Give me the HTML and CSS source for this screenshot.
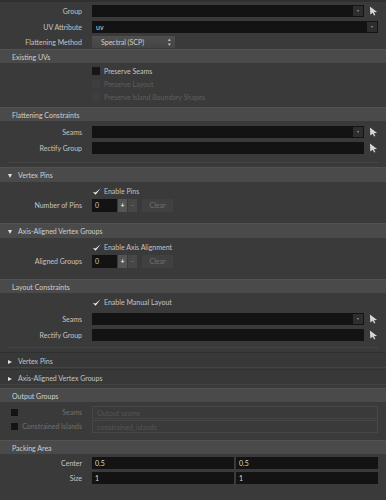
FILE: index.html
```html
<!DOCTYPE html>
<html lang="en">
    <head>
        <meta charset="UTF-8" />
        <title>UV Flatten</title>
        <link rel="stylesheet" href="styles.css">
    </head>
    <body>
        <div class="panel">
            <div class="top-rows">
                <div class="row">
                    <span class="label">Group</span>
                    <div class="field field-short"><span class="drop"></span></div>
                    <svg class="pick" viewBox="0 0 10 10"><path d="M1 0 L9 6 L5.5 6.3 L7 9.5 L5.6 10 L4.2 6.9 L1.5 9 Z" /></svg>
                </div>
                <div class="row">
                    <span class="label">UV Attribute</span>
                    <div class="field field-long">uv<span class="drop"></span></div>
                </div>
                <div class="row">
                    <span class="label">Flattening Method</span>
                    <div class="menu">Spectral (SCP)<span class="spin">&#x25B4;<br />&#x25BE;</span></div>
                </div>
            </div>

            <div class="band">Existing UVs</div>
            <div class="section checks">
                <div class="row check-row"><span class="box"></span><span>Preserve Seams</span></div>
                <div class="row check-row disabled"><span class="box"></span><span>Preserve Layout</span></div>
                <div class="row check-row disabled"><span class="box"></span><span>Preserve Island Boundary Shapes</span></div>
            </div>

            <div class="band">Flattening Constraints</div>
            <div class="section fields">
                <div class="row">
                    <span class="label">Seams</span>
                    <div class="field field-short"><span class="drop"></span></div>
                    <svg class="pick" viewBox="0 0 10 10"><path d="M1 0 L9 6 L5.5 6.3 L7 9.5 L5.6 10 L4.2 6.9 L1.5 9 Z" /></svg>
                </div>
                <div class="row">
                    <span class="label">Rectify Group</span>
                    <div class="field field-short"></div>
                    <svg class="pick" viewBox="0 0 10 10"><path d="M1 0 L9 6 L5.5 6.3 L7 9.5 L5.6 10 L4.2 6.9 L1.5 9 Z" /></svg>
                </div>
            </div>
            <div class="divider"></div>

            <div class="band folder"><span class="tri-down"></span>Vertex Pins</div>
            <div class="section pins">
                <div class="row check-row"><span class="box checked"><svg viewBox="0 0 10 10"><path d="M1 5.5 L4 8.5 L9.5 1.5 L4 6 Z" /></svg></span><span>Enable Pins</span></div>
                <div class="row">
                    <span class="label">Number of Pins</span>
                    <div class="num">0</div>
                    <span class="plus">+</span>
                    <span class="minus">&minus;</span>
                    <span class="clear">Clear</span>
                </div>
            </div>

            <div class="band folder"><span class="tri-down"></span>Axis-Aligned Vertex Groups</div>
            <div class="section pins">
                <div class="row check-row"><span class="box checked"><svg viewBox="0 0 10 10"><path d="M1 5.5 L4 8.5 L9.5 1.5 L4 6 Z" /></svg></span><span>Enable Axis Alignment</span></div>
                <div class="row">
                    <span class="label">Aligned Groups</span>
                    <div class="num">0</div>
                    <span class="plus">+</span>
                    <span class="minus">&minus;</span>
                    <span class="clear">Clear</span>
                </div>
            </div>

            <div class="band">Layout Constraints</div>
            <div class="section layout">
                <div class="row check-row"><span class="box checked"><svg viewBox="0 0 10 10"><path d="M1 5.5 L4 8.5 L9.5 1.5 L4 6 Z" /></svg></span><span>Enable Manual Layout</span></div>
                <div class="row">
                    <span class="label">Seams</span>
                    <div class="field field-short"><span class="drop"></span></div>
                    <svg class="pick" viewBox="0 0 10 10"><path d="M1 0 L9 6 L5.5 6.3 L7 9.5 L5.6 10 L4.2 6.9 L1.5 9 Z" /></svg>
                </div>
                <div class="row">
                    <span class="label">Rectify Group</span>
                    <div class="field field-short"></div>
                    <svg class="pick" viewBox="0 0 10 10"><path d="M1 0 L9 6 L5.5 6.3 L7 9.5 L5.6 10 L4.2 6.9 L1.5 9 Z" /></svg>
                </div>
            </div>
            <div class="divider"></div>

            <div class="closed"><span class="tri-right"></span>Vertex Pins</div>
            <div class="closed"><span class="tri-right"></span>Axis-Aligned Vertex Groups</div>

            <div class="band">Output Groups</div>
            <div class="section outputs">
                <div class="row">
                    <span class="toggle"></span>
                    <span class="label dim">Seams</span>
                    <div class="ghost">Output seams</div>
                </div>
                <div class="row">
                    <span class="toggle"></span>
                    <span class="label dim">Constrained Islands</span>
                    <div class="ghost">constrained_islands</div>
                </div>
            </div>

            <div class="band">Packing Area</div>
            <div class="section packing">
                <div class="row">
                    <span class="label">Center</span>
                    <div class="vec">0.5</div>
                    <div class="vec">0.5</div>
                </div>
                <div class="row">
                    <span class="label">Size</span>
                    <div class="vec">1</div>
                    <div class="vec">1</div>
                </div>
            </div>
        </div>
    </body>
</html>
```

FILE: styles.css
```css
body {
    margin: 0;
    background-color: #3a3a3a;
    font-family: 'Lato', 'Open Sans', sans-serif;
    font-size: 7px;
    color: #c4c4c4;
}
.panel {
    width: 386px;
    height: 500px;
    overflow: hidden;
    border-top: 2px solid #303030;
}
.top-rows {
    padding-top: 3px;
}
.top-rows .row {
    margin-bottom: 3.5px;
}
.top-rows .row:last-child {
    margin-bottom: 0.5px;
}
.row {
    display: flex;
    align-items: center;
    height: 12px;
}
.label {
    width: 82px;
    flex-shrink: 0;
    text-align: right;
    margin-right: 10px;
    white-space: nowrap;
}
.label.dim {
    color: #707070;
}
.field {
    position: relative;
    height: 12px;
    background-color: #131313;
    box-sizing: border-box;
    padding-left: 4px;
    line-height: 12px;
    color: #d8d8d8;
}
.field-short {
    width: 272px;
}
.field-long {
    width: 286px;
}
.drop {
    position: absolute;
    right: 1px;
    top: 1px;
    width: 10px;
    height: 10px;
    background-color: #2e2e2e;
}
.drop::after {
    content: '';
    position: absolute;
    left: 3.5px;
    top: 4px;
    border-left: 1.5px solid transparent;
    border-right: 1.5px solid transparent;
    border-top: 2px solid #9a9a9a;
}
.pick {
    width: 9px;
    height: 10px;
    margin-left: 5px;
    fill: #d6d6d6;
}
.menu {
    position: relative;
    width: 83px;
    height: 12px;
    line-height: 12px;
    box-sizing: border-box;
    padding-left: 9px;
    background: linear-gradient(#4e4e4e, #444444);
    border-radius: 1px;
    color: #d0d0d0;
}
.spin {
    position: absolute;
    right: 4px;
    top: 1px;
    font-size: 5px;
    line-height: 5px;
    color: #c8c8c8;
}
.band {
    height: 14px;
    line-height: 14px;
    background-color: #4a4a4a;
    border-top: 1px solid #525252;
    box-sizing: border-box;
    padding-left: 12px;
    color: #d0d0d0;
}
.band.folder {
    height: 15px;
    line-height: 15px;
    padding-left: 8px;
}
.tri-down {
    display: inline-block;
    vertical-align: middle;
    margin-right: 6px;
    border-left: 2.5px solid transparent;
    border-right: 2.5px solid transparent;
    border-top: 4px solid #e0e0e0;
}
.tri-right {
    display: inline-block;
    vertical-align: middle;
    margin-right: 6px;
    border-top: 2.5px solid transparent;
    border-bottom: 2.5px solid transparent;
    border-left: 4px solid #e0e0e0;
}
.section {
    box-sizing: border-box;
}
.check-row {
    height: 13px;
    padding-left: 92px;
}
.box {
    width: 8px;
    height: 8px;
    margin-right: 4px;
    background-color: #161616;
    position: relative;
}
.box.checked {
    background-color: transparent;
}
.box svg {
    width: 9px;
    height: 9px;
    fill: #f0f0f0;
}
.disabled {
    color: #5e5e5e;
}
.disabled .box {
    background-color: #3e3e3e;
}
.checks {
    padding-top: 2px;
    height: 44px;
}
.fields {
    padding-top: 5px;
    height: 41px;
}
.fields .row + .row,
.layout .row + .row {
    margin-top: 4px;
}
.divider {
    height: 1px;
    background-color: #454545;
    margin: 0 8px 4px;
}
.pins {
    padding-top: 3px;
    height: 41px;
}
.pins .row:last-child {
    height: 13px;
    margin-top: 1px;
}
.num {
    width: 25px;
    height: 13px;
    line-height: 13px;
    box-sizing: border-box;
    padding-left: 3px;
    background-color: #131313;
}
.plus,
.minus {
    width: 9px;
    height: 13px;
    line-height: 13px;
    text-align: center;
    margin-left: 1px;
    background-color: #555555;
    color: #f0f0f0;
    font-weight: bold;
}
.minus {
    background-color: #474747;
    color: #6a6a6a;
}
.clear {
    width: 31px;
    height: 13px;
    line-height: 13px;
    margin-left: 5px;
    text-align: center;
    background-color: #404040;
    color: #707070;
}
.layout {
    padding-top: 3px;
    height: 54px;
}
.layout .check-row {
    margin-bottom: 1px;
}
.closed {
    height: 16px;
    line-height: 16px;
    padding-left: 8px;
    border-top: 1px solid #303030;
    border-bottom: 1px solid #444444;
    background-color: #383838;
    box-sizing: border-box;
    margin-bottom: 1px;
}
.closed + .closed {
    margin-bottom: 3px;
}
.outputs {
    padding-top: 4px;
    height: 38px;
}
.outputs .row {
    height: 13px;
    margin-bottom: 1px;
}
.toggle {
    width: 7px;
    height: 7px;
    margin-left: 11px;
    margin-right: -18px;
    background-color: #141414;
}
.ghost {
    width: 286px;
    height: 13px;
    line-height: 13px;
    box-sizing: border-box;
    padding-left: 4px;
    border: 1px solid #474747;
    color: #555555;
}
.packing {
    padding-top: 3px;
}
.packing .row + .row {
    margin-top: 3px;
}
.vec {
    width: 142px;
    height: 12px;
    line-height: 12px;
    box-sizing: border-box;
    padding-left: 3px;
    margin-right: 2px;
    background-color: #131313;
    color: #d8d8d8;
}
```
